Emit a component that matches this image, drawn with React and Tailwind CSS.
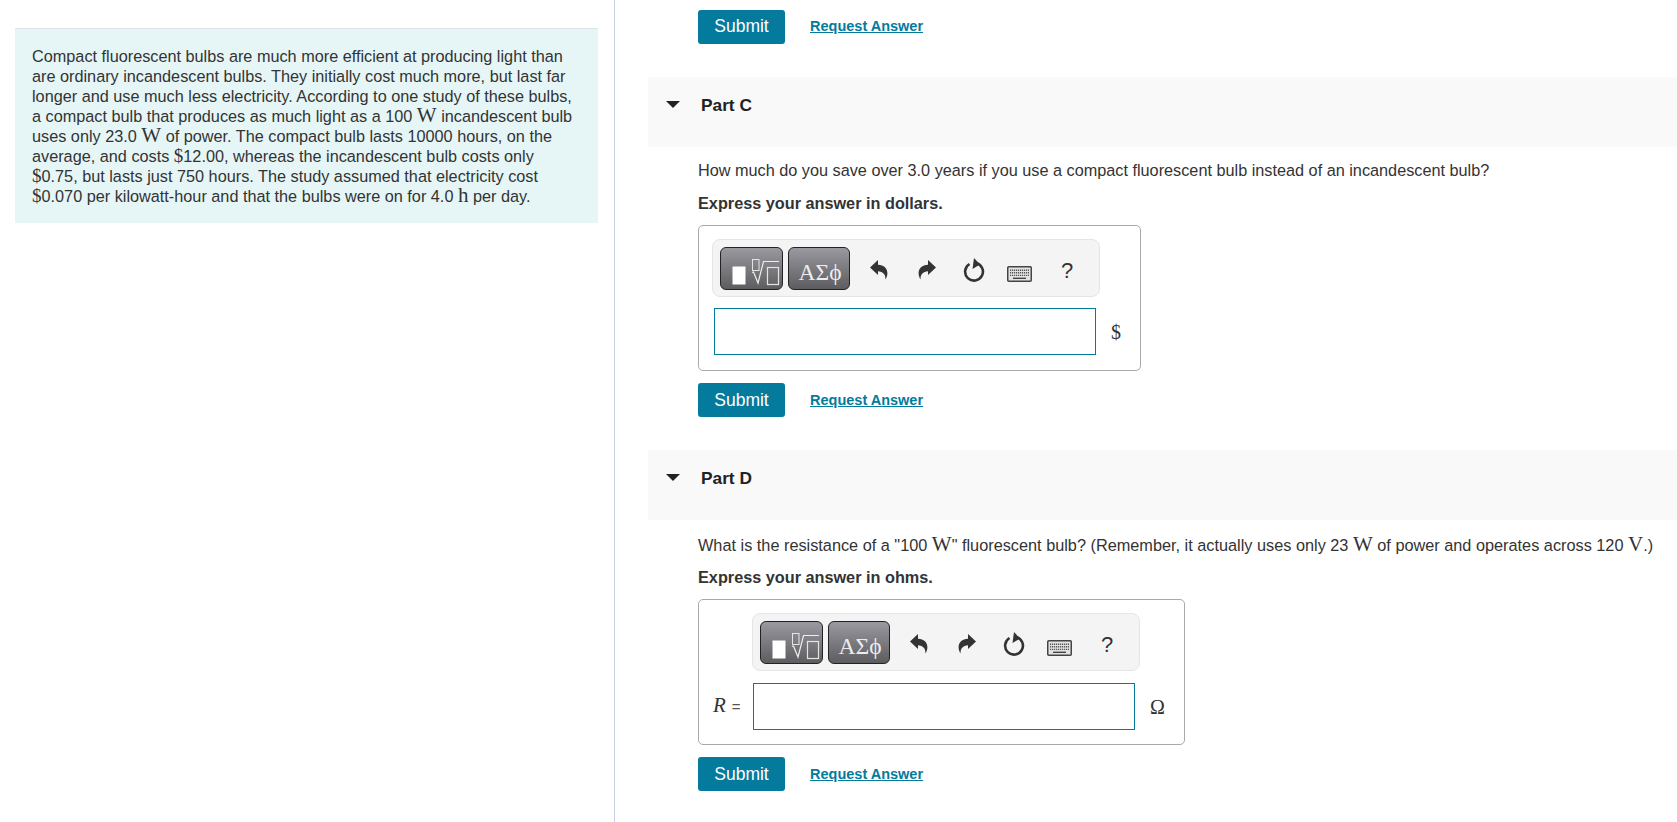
const mathFont = "font-['Liberation_Serif',serif] leading-none";
const inlineMath = "font-['Liberation_Serif',serif] leading-[0]";

const RootIcon = () => (
  <svg width="60" height="40" viewBox="0 0 60 40" fill="none">
    <rect x="10.500" y="17.500" width="13" height="18" fill="#fff" />
    <rect x="30.500" y="10.500" width="6.500" height="11" stroke="#e4e4e4" strokeWidth="1" />
    <path d="M30 23.500l1.500-.5 4.500 11 5.500-21.500h15.500" stroke="#eee" strokeWidth="1.200" />
    <rect x="45.500" y="18.500" width="11" height="17" stroke="#e4e4e4" strokeWidth="1.200" />
  </svg>
);

const UndoIcon = ({ flip }) => (
  <svg width="18" height="20" viewBox="0 0 18 20" className={flip ? "-scale-x-100" : ""} fill="#333">
    <path d="M0 7.500 8 0v4.700c5.800.2 9.600 3.600 9.400 8.800-.1 2.300-.9 4.400-2 6 .5-4.800-2.400-8-7.400-8.200V15Z" />
  </svg>
);

const ResetIcon = () => (
  <svg width="22" height="25" viewBox="0 0 22 25" fill="none">
    <path d="M6.500 6a8.900 8.900 0 1 0 6.500-1" stroke="#333" strokeWidth="2.600" />
    <path d="M11 0l6 6.500-7.500 4.500Z" fill="#333" />
  </svg>
);

const KeyboardIcon = () => (
  <svg width="25" height="16" viewBox="0 0 25 16" fill="none">
    <rect x="0.750" y="0.750" width="23.500" height="14.500" rx="1" fill="#e2e2e2" stroke="#444" strokeWidth="1.500" />
    <path d="M3 4.200h19M3 6.800h19M3 9.400h19" stroke="#555" strokeWidth="1.400" strokeDasharray="1.200 .8" />
    <path d="M6 12.300h13" stroke="#444" strokeWidth="1.400" />
  </svg>
);

const Toolbar = () => (
  <div className="flex items-start h-[58px] w-[388px] rounded-lg border border-[#e5e5e5] bg-[#f4f4f4] pl-[7px] pt-[7px]">
    <div className="flex items-center justify-center w-[63px] h-[43px] rounded-md border border-[#222] bg-gradient-to-b from-[#9a99a1] to-[#5d5d60]">
      <RootIcon />
    </div>
    <div className={`ml-[5px] flex items-center justify-center w-[62px] h-[43px] rounded-md border border-[#222] bg-gradient-to-b from-[#9a99a1] to-[#5d5d60] pt-[9px] pl-[2px] text-[23.500px] text-[#ececec] ${mathFont}`}>
      ΑΣϕ
    </div>
    <div className="ml-5 mt-[13px]">
      <UndoIcon />
    </div>
    <div className="ml-[30px] mt-[13px]">
      <UndoIcon flip />
    </div>
    <div className="ml-[27px] mt-[11px]">
      <ResetIcon />
    </div>
    <div className="ml-[22px] mt-[19px]">
      <KeyboardIcon />
    </div>
    <div className="ml-[29px] mt-[11px] text-[22px] leading-[26px] text-[#333]">?</div>
  </div>
);

const AnswerBox = ({ label, unit, boxWidth, inputWidth }) => (
  <div className={`mt-3 h-[146px] rounded-[5px] border border-[#aaa] p-[13px] ${boxWidth}`}>
    <div className={label ? "pl-[40px]" : ""}>
      <Toolbar />
    </div>
    <div className={`flex items-center ${label ? "mt-3" : "mt-[11px]"}`}>
      {label ? (
        <div className="w-[41px] pl-[1px] text-[#555] text-[15px]">
          <span className={`italic text-[21px] text-[#333] ${inlineMath}`}>R</span>
          <span className="ml-[6px]">=</span>
        </div>
      ) : (
        <div className="w-[2px]" />
      )}
      <div className={`h-[47px] border border-[#047a9c] bg-white ${inputWidth}`} />
      <div className={`ml-[14px] pl-[1px] text-[#333] text-[20px] ${mathFont}`}>{unit}</div>
    </div>
  </div>
);

const SubmitRow = () => (
  <div className="flex items-center">
    <button className="h-[34px] w-[87px] rounded-[3px] bg-[#047a9c] pb-[1px] text-[17.500px] text-white">Submit</button>
    <a href="#" className="ml-[25px] text-[14.500px] font-bold text-[#047a9c] underline">
      Request Answer
    </a>
  </div>
);

const W = () => <span className={`text-[21px] ${inlineMath}`}>W</span>;
const Dollar = () => <span className={`text-[19px] ${inlineMath}`}>$</span>;

const Part = ({ title, children }) => (
  <div className="mt-[33px]">
    <div className="flex h-[70px] items-start bg-[#f9f9f9] pl-[18px] pt-[18px]">
      <svg width="14" height="7" viewBox="0 0 14 7" className="mt-[6px]">
        <path d="M0 0h14L7 7Z" fill="#222" />
      </svg>
      <div className="ml-[21px] text-[17.300px] font-bold text-[#222] leading-5">{title}</div>
    </div>
    <div className="pl-[50px] text-[16.250px] text-[#333] leading-5">{children}</div>
  </div>
);

export default function App() {
  return (
    <div className="flex h-[822px] overflow-hidden bg-white font-['Liberation_Sans',sans-serif] text-base">
      <div className="w-[615px] shrink-0 border-r border-[#c5d3e6] pl-[15px] pt-7">
        <div className="w-[583px] h-[195px] border-t border-[#dde3e6] bg-[#e6f6f7] pl-[17px] pt-[17px] text-[16.250px] leading-5 text-[#333]">
          Compact fluorescent bulbs are much more efficient at producing light than
          <br />
          are ordinary incandescent bulbs. They initially cost much more, but last far
          <br />
          longer and use much less electricity. According to one study of these bulbs,
          <br />
          a compact bulb that produces as much light as a 100 <W /> incandescent bulb
          <br />
          uses only 23.0 <W /> of power. The compact bulb lasts 10000 hours, on the
          <br />
          average, and costs <Dollar />12.00, whereas the incandescent bulb costs only
          <br />
          <Dollar />0.75, but lasts just 750 hours. The study assumed that electricity cost
          <br />
          <Dollar />0.070 per kilowatt-hour and that the bulbs were on for 4.0 <span className={`text-[21px] ${inlineMath}`}>h</span> per day.
        </div>
      </div>

      <div className="flex-1 pl-[33px] pt-[10px]">
        <div className="pl-[50px]">
          <SubmitRow />
        </div>

        <Part title="Part C">
          <p className="mt-[13px]">How much do you save over 3.0 years if you use a compact fluorescent bulb instead of an incandescent bulb?</p>
          <p className="mt-[13px] font-bold">Express your answer in dollars.</p>
          <AnswerBox unit="$" boxWidth="w-[443px]" inputWidth="w-[382px]" />
          <div className="mt-3">
            <SubmitRow />
          </div>
        </Part>

        <Part title="Part D">
          <p className="mt-[15px] whitespace-nowrap text-[16.300px]">
            What is the resistance of a "100 <W />" fluorescent bulb? (Remember, it actually uses only 23 <W /> of power and operates across 120{" "}
            <span className={`text-[21px] ${inlineMath}`}>V</span>.)
          </p>
          <p className="mt-3 font-bold">Express your answer in ohms.</p>
          <AnswerBox label unit="Ω" boxWidth="w-[487px]" inputWidth="w-[382px]" />
          <div className="mt-3">
            <SubmitRow />
          </div>
        </Part>
      </div>
    </div>
  );
}
